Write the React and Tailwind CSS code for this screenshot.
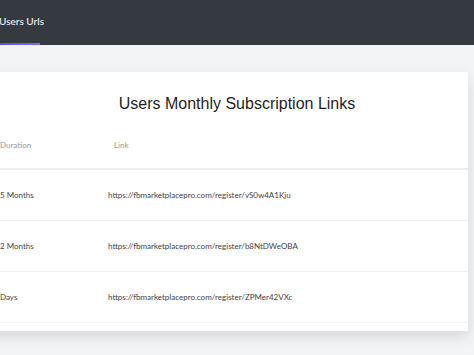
const rows = [
  { duration: '5 Months', link: 'https://fbmarketplacepro.com/register/vS0w4A1Kju' },
  { duration: '2 Months', link: 'https://fbmarketplacepro.com/register/b8NtDWeOBA' },
  { duration: 'Days', link: 'https://fbmarketplacepro.com/register/ZPMer42VXc' },
]

export default function App() {
  return (
    <div className="w-[474px] h-[355px] overflow-hidden bg-[#f3f4f6] font-['Lato',sans-serif]">
      {/* nav */}
      <div className="h-[45px] bg-[#353940] flex">
        <div className="-ml-[1px] w-[41px] h-full flex flex-col">
          <div className="flex-1 flex items-center text-[10px] font-semibold text-[#e4e5ea] whitespace-nowrap">
            Users Urls
          </div>
          <div className="h-[2px] bg-gradient-to-r from-[#5a4fd8] to-[#7b6ff0]" />
        </div>
      </div>

      {/* card */}
      <div className="pt-[27px]">
        <div className="-ml-[20px] w-[488px] bg-white shadow-[0_6px_14px_rgba(0,0,0,0.12)]">
          <h1 className="pl-[26px] pt-[22px] text-center text-[16px] leading-[19px] text-[#1f1f1f] font-['Liberation_Sans',sans-serif]">
            Users Monthly Subscription Links
          </h1>
          <div className="mt-[9px] h-[48px] flex items-center border-b-2 border-[#eceef4] text-[8px] text-[#9a9a9a]">
            <div className="pl-[20px] w-[134px]">Duration</div>
            <div>Link</div>
          </div>
          {rows.map(r => (
            <div key={r.link} className="h-[51px] flex items-center border-b border-[#f1f2f5] text-[8px] text-[#444]">
              <div className="pl-[20px] w-[128px]">{r.duration}</div>
              <div>{r.link}</div>
            </div>
          ))}
          <div className="h-[8px]" />
        </div>
      </div>
    </div>
  )
}
